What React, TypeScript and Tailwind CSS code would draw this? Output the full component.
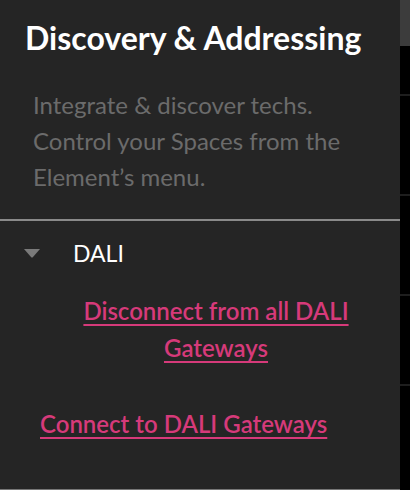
export default function App() {
  const stripLines = [94, 194, 294, 384];
  return (
    <div className="flex w-[410px] h-[490px] bg-black overflow-hidden" style={{ fontFamily: 'Lato, "Noto Sans", sans-serif' }}>
      <div className="w-[400px] h-[490px] bg-[#252525] flex flex-col border-b border-[#777]">
        <h1 className="pl-[25px] pt-[20px] text-[32px] leading-[36px] font-bold text-white">Discovery &amp; Addressing</h1>
        <p className="pl-[33px] pr-[40px] pt-[31px] text-[24px] leading-[36px] text-[#6b6b6b]">
          Integrate &amp; discover techs. Control your Spaces from the Element’s menu.
        </p>
        <div className="mt-[24px] h-[2px] bg-[#8a8a8a]" />
        <div className="flex items-center h-[28px] mt-[18px]">
          <svg width="18" height="10" viewBox="0 0 18 10" className="ml-[23px]">
            <path d="M1 1 H17 L10 9 Q9 10 8 9 Z" fill="#7a7a7a" />
          </svg>
          <span className="ml-[32px] text-[23px] text-white">DALI</span>
        </div>
        <div className="pl-[40px] mt-[25px]">
          <a href="#" className="block w-[352px] text-center text-[24px] leading-[37px] text-[#d63a7a] underline underline-offset-[4px] font-semibold">
            Disconnect from all DALI Gateways
          </a>
          <a href="#" className="inline-block mt-[39px] text-[24px] leading-[37px] text-[#d63a7a] underline underline-offset-[4px] font-semibold">
            Connect to DALI Gateways
          </a>
        </div>
      </div>
      <div className="w-[10px] flex flex-col relative">
        <div className="h-[46px] bg-[#3c3c3c]" />
        {stripLines.map(y => (
          <div key={y} className="absolute left-0 w-[10px] h-[2px] bg-[#1e1e1e]" style={{ top: y }} />
        ))}
      </div>
    </div>
  );
}
